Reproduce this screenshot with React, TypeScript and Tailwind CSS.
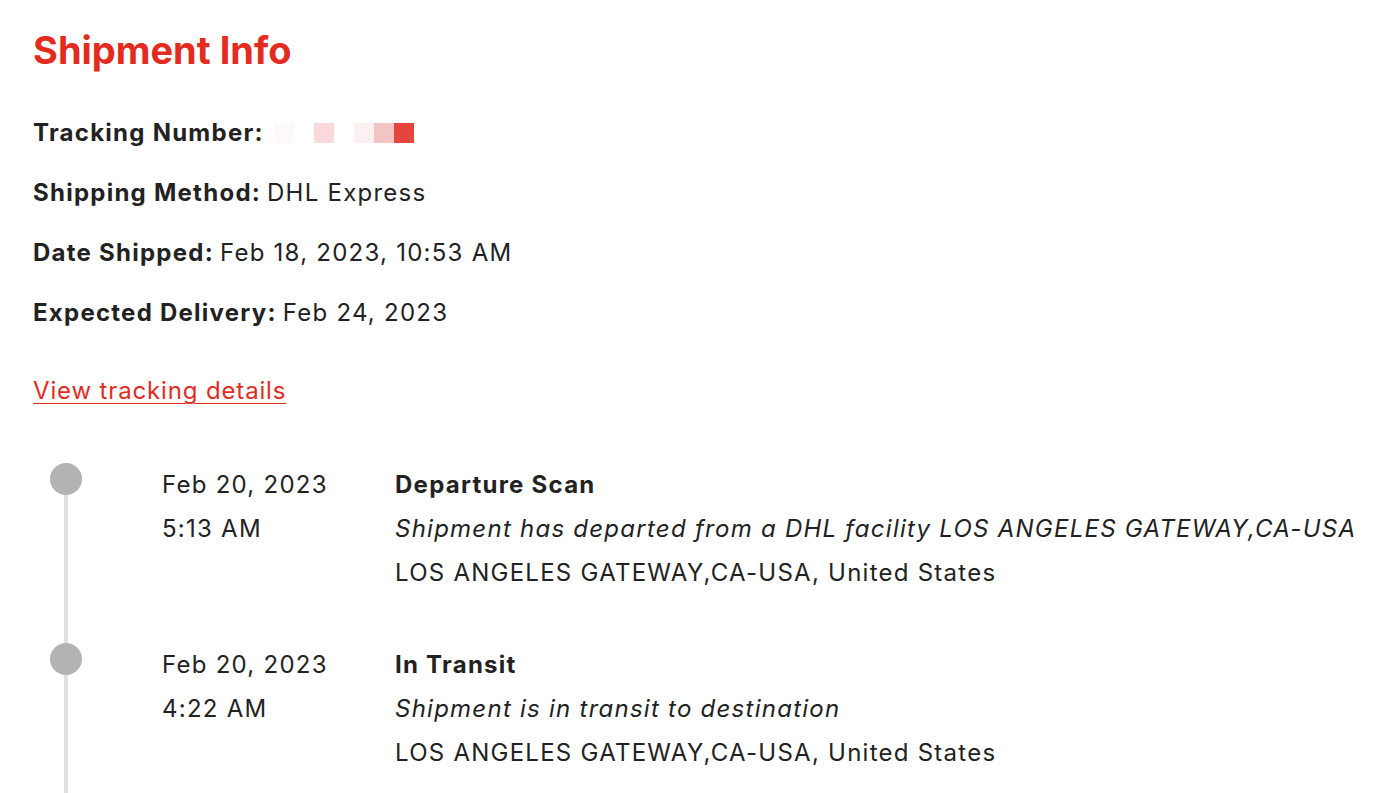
import React from "react";

const info = [
  { label: "Shipping Method:", value: "DHL Express" },
  { label: "Date Shipped:", value: "Feb 18, 2023, 10:53 AM" },
  { label: "Expected Delivery:", value: "Feb 24, 2023" },
];

const events = [
  {
    date: "Feb 20, 2023",
    time: "5:13 AM",
    title: "Departure Scan",
    desc: "Shipment has departed from a DHL facility LOS ANGELES GATEWAY,CA-USA",
    place: "LOS ANGELES GATEWAY,CA-USA, United States",
  },
  {
    date: "Feb 20, 2023",
    time: "4:22 AM",
    title: "In Transit",
    desc: "Shipment is in transit to destination",
    place: "LOS ANGELES GATEWAY,CA-USA, United States",
  },
];

// redacted tracking number blocks
const blocks = ["#fefafa", "transparent", "#f9d9db", "transparent", "#fdf0f1", "#f4c4c5", "#e5463c"];

export default function App() {
  return (
    <div
      className="min-h-screen bg-white text-[#222222] pl-[33px] pt-[24px] overflow-hidden"
      style={{ fontFamily: "Inter, Lato, sans-serif" }}
    >
      <h1 className="text-[38px] leading-[52px] font-bold text-[#e32b1f]">Shipment Info</h1>

      <div className="mt-[27px] text-[24px] tracking-[1.25px]">
        <div className="h-[60px] flex items-center">
          <span className="font-bold">Tracking Number:</span>
          <span className="ml-[10px] flex">
            {blocks.map((c, i) => (
              <span key={i} className="w-[20px] h-[20px]" style={{ background: c }} />
            ))}
          </span>
        </div>
        {info.map((r) => (
          <div key={r.label} className="h-[60px] flex items-center">
            <span className="font-bold">{r.label}</span>
            <span className="ml-[6px]">{r.value}</span>
          </div>
        ))}
      </div>

      <a href="#" className="block mt-[18px] h-[60px] leading-[60px] text-[24px] tracking-[0.85px] text-[#e32b1f] underline underline-offset-4 decoration-1 w-fit">
        View tracking details
      </a>

      <div className="mt-[42px] pl-[17px]">
        {events.map((e, i) => (
          <div key={i} className="relative flex items-start pb-[48px] text-[24px] leading-[44px] tracking-[1.25px]">
            <div className="absolute left-[14px] top-[16px] -bottom-[200px] w-[4px] bg-[#e0e0e0]" />
            <div className="relative w-[32px] h-[32px] rounded-full bg-[#b3b3b3] shrink-0" />
            <div className="ml-[80px] w-[233px] shrink-0">
              <div>{e.date}</div>
              <div>{e.time}</div>
            </div>
            <div>
              <div className="font-bold">{e.title}</div>
              <div className="italic">{e.desc}</div>
              <div>{e.place}</div>
            </div>
          </div>
        ))}
      </div>
    </div>
  );
}
